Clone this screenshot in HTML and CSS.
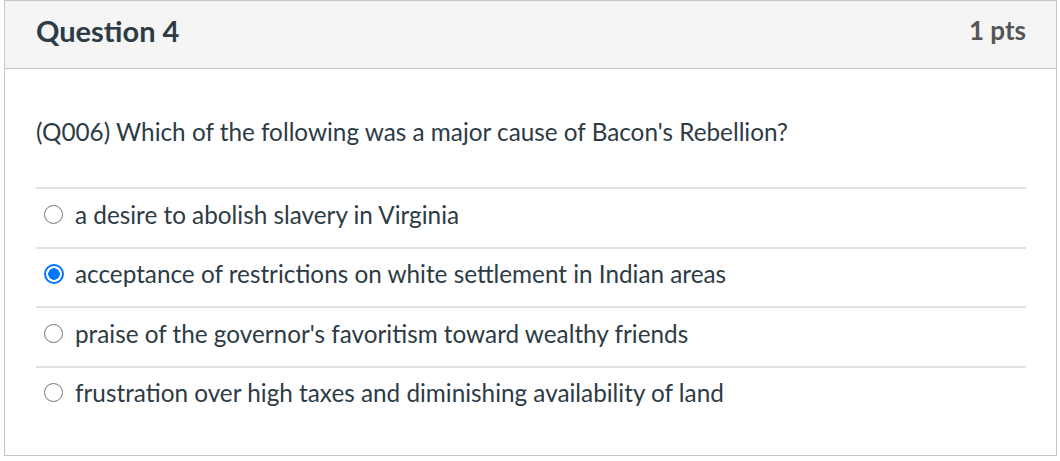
FILE: index.html
```html
<!DOCTYPE html>
<html>
<head>
<meta charset="utf-8">
<link rel="stylesheet" href="styles.css">
</head>
<body>
<div class="question">
  <div class="header">
    <h2 class="name">Question 4</h2>
    <div class="points">1 pts</div>
  </div>
  <div class="content">
    <p class="text">(Q006) Which of the following was a major cause of Bacon's Rebellion?</p>
    <div class="answers">
      <label class="answer"><span class="radio"></span><span>a desire to abolish slavery in Virginia</span></label>
      <label class="answer"><span class="radio checked"></span><span>acceptance of restrictions on white settlement in Indian areas</span></label>
      <label class="answer"><span class="radio"></span><span>praise of the governor's favoritism toward wealthy friends</span></label>
      <label class="answer"><span class="radio"></span><span>frustration over high taxes and diminishing availability of land</span></label>
    </div>
  </div>
</div>
</body>
</html>
```
FILE: styles.css
```css
html, body {
  margin: 0;
  padding: 0;
  background: #fff;
}
body {
  font-family: Lato, "Liberation Sans", sans-serif;
  color: #2d3b45;
}
.question {
  margin-left: 4px;
  width: 1053px;
  height: 456px;
  box-sizing: border-box;
  border: 1px solid #c7c7c7;
}
.header {
  display: flex;
  align-items: center;
  justify-content: space-between;
  height: 68px;
  box-sizing: border-box;
  background: #f5f5f5;
  border-bottom: 1px solid #c7c7c7;
  padding: 0 30px 9px 31px;
}
.name {
  margin: 0;
  font-size: 29px;
  font-weight: 700;
  color: #2d3b45;
}
.points {
  font-size: 26px;
  font-weight: 700;
  color: #565656;
}
.content {
  padding: 0 30px 0 31px;
}
.text {
  margin: 0;
  padding-top: 48px;
  height: 118px;
  box-sizing: border-box;
  font-size: 24.3px;
  line-height: 30px;
}
.answers {
  display: flex;
  flex-direction: column;
}
.answer {
  display: flex;
  align-items: center;
  gap: 12px;
  height: 59.5px;
  box-sizing: border-box;
  border-top: 2px solid #e2e2e2;
  padding-left: 8px;
  padding-bottom: 7px;
  font-size: 24.3px;
}
.radio {
  width: 19px;
  height: 19px;
  box-sizing: border-box;
  border: 1.5px solid #777;
  border-radius: 50%;
  flex: none;
}
.radio.checked {
  width: 20px;
  height: 20px;
  margin-right: -1px;
  border: 2px solid #0075ff;
  background: radial-gradient(circle, #0075ff 0 5.5px, #fff 6px);
}
```
